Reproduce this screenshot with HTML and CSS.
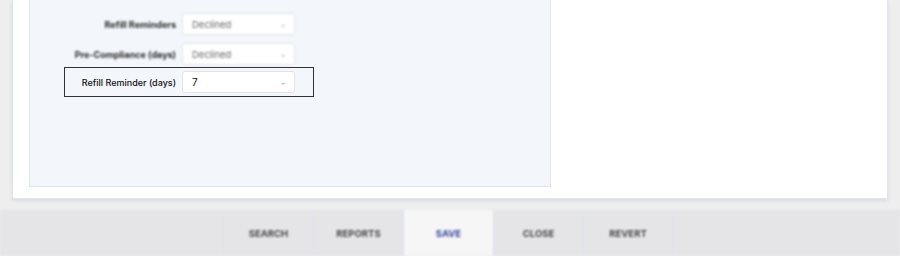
FILE: index.html
```html
<!DOCTYPE html>
<html lang="en">
<head>
  <meta charset="UTF-8">
  <meta name="viewport" content="width=device-width, initial-scale=1.0">
  <title>Reminder Settings</title>
  <link rel="stylesheet" href="styles.css">
</head>
<body>
  <div class="page">
    <div class="card">
      <div class="panel">
        <div class="row blurred">
          <label>Refill Reminders</label>
          <div class="select"><span>Declined</span><span class="caret"></span></div>
        </div>
        <div class="row blurred">
          <label>Pre-Compliance (days)</label>
          <div class="select"><span>Declined</span><span class="caret"></span></div>
        </div>
        <div class="row focus">
          <label>Refill Reminder (days)</label>
          <div class="select"><span class="value">7</span><span class="caret"></span></div>
        </div>
      </div>
    </div>
  </div>
  <div class="toolbar">
    <button class="tab">SEARCH</button>
    <button class="tab">REPORTS</button>
    <button class="tab active">SAVE</button>
    <button class="tab">CLOSE</button>
    <button class="tab">REVERT</button>
  </div>
</body>
</html>
```

FILE: styles.css
```css
body {
  margin: 0;
  background: #eeeeef;
  font-family: Inter, "Noto Sans", sans-serif;
  height: 256px;
  overflow: hidden;
}
.page {
  padding: 0 12px;
}
.card {
  background: #ffffff;
  height: 199px;
  box-sizing: border-box;
  padding-left: 16px;
  border: 1px solid #dde5f0;
  border-top: none;
  box-shadow: 0 2px 4px rgba(0,0,0,0.08);
}
.panel {
  width: 522px;
  height: 187px;
  box-sizing: border-box;
  background: #f3f6fb;
  border: 1px solid #dce6f2;
  border-top: none;
  padding: 9px 0 0 34px;
}
.row {
  display: flex;
  align-items: center;
  width: 250px;
  box-sizing: border-box;
  padding: 3px 0;
  border: 1px solid transparent;
}
.row label {
  width: 111px;
  text-align: right;
  font-size: 9px;
  font-weight: 600;
  color: #222;
  margin-right: 6px;
}
.row.blurred {
  filter: blur(0.8px);
}
.row.blurred label {
  font-weight: 700;
  color: #2a2a2a;
}
.row.focus {
  border-color: #333;
  margin-top: -2px;
}
.row.focus label {
  font-weight: 500;
  color: #111;
}
.select {
  width: 113px;
  height: 22px;
  box-sizing: border-box;
  background: #fff;
  border: 1px solid #dfe4ec;
  border-radius: 3px;
  display: flex;
  align-items: center;
  justify-content: space-between;
  padding: 0 9px;
  font-size: 9.5px;
  color: #666;
}
.select .value {
  color: #111;
  font-size: 10px;
}
.caret {
  width: 0;
  height: 0;
  border-left: 2.5px solid transparent;
  border-right: 2.5px solid transparent;
  border-top: 2.5px solid #b8bec8;
  margin-top: 4px;
}
.toolbar {
  margin-top: 11px;
  height: 46px;
  background: #e5e5e8;
  display: flex;
  padding-left: 223px;
  filter: blur(0.8px);
}
.tab {
  width: 90px;
  border: none;
  border-left: 1px solid #dde1ec;
  background: #e5e5e8;
  font-family: Inter, "Noto Sans", sans-serif;
  font-size: 9.5px;
  font-weight: 700;
  color: #4a4a4a;
  cursor: pointer;
  padding: 0;
}
.tab:last-child {
  border-right: 1px solid #dde1ec;
}
.tab.active {
  background: #f6f6f7;
  color: #36479c;
}
```
